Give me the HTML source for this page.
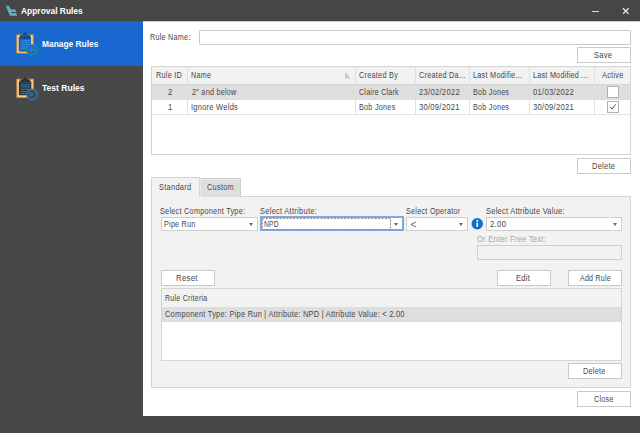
<!DOCTYPE html>
<html><head><meta charset="utf-8">
<style>
*{margin:0;padding:0;box-sizing:border-box}
html,body{width:640px;height:433px;overflow:hidden;background:#484848;font-family:"Liberation Sans",sans-serif;font-size:8.6px;color:#3a3a3a}
.a{position:absolute}
.t{position:absolute;white-space:nowrap;line-height:10px;transform-origin:0 0}
.btn{position:absolute;background:#fff;border:1px solid #cacaca}
.box{position:absolute;background:#fff;border:1px solid #cfcfcf}
.sep{position:absolute;width:1px;background:#e0e0e0}
.arrow{position:absolute;width:0;height:0;border-left:2.5px solid transparent;border-right:2.5px solid transparent;border-top:3px solid #666}
</style></head><body>
<div class="a" style="left:0;top:0;width:640px;height:21px;background:#464646"></div>
<div class="a" style="left:0;top:21px;width:143px;height:45px;background:#1868d0"></div>
<div class="a" style="left:143px;top:21px;width:497px;height:395px;background:#fff"></div>
<div class="a" style="left:143px;top:21px;width:497px;height:1px;background:#cfcfcf"></div>
<div class="a" style="left:0;top:21px;width:143px;height:1px;background:#2a5ea4"></div>

<!-- title icon -->
<svg class="a" style="left:5px;top:5px" width="13" height="12" viewBox="0 0 13 12">
<path d="M0.74 0.74 L3.86 0.74 L5.73 4.48 L10.3 4.48 L11.35 6.98 L5.94 6.98 L6.36 8.02 L11.14 8.02 L12.18 10.72 L4.9 10.72 Z" fill="#5cb2cf"/>
</svg>
<div class="a" style="left:592.3px;top:10.5px;width:6.5px;height:1.3px;background:#dedede"></div>
<svg class="a" style="left:621px;top:7px" width="9" height="9" viewBox="0 0 9 9"><path d="M2 1.3L7.6 6.9M7.6 1.3L2 6.9" stroke="#f0f0f0" stroke-width="1.25"/></svg>

<!-- sidebar icons -->
<svg class="a" style="left:0;top:0" width="45" height="110" viewBox="0 0 45 110">
<!-- manage -->
<rect x="16.4" y="34.5" width="17.2" height="19" fill="#f0963a"/>
<rect x="17.4" y="35.5" width="15.2" height="17" fill="#fdd590"/>
<rect x="18.9" y="37" width="12.2" height="14" fill="#1868d0"/>
<path d="M19.4 37.3V51.1H27" fill="none" stroke="#1d4f8c" stroke-width="0.9"/>
<g stroke="#3f92e2" stroke-width="0.8"><path d="M20.6 40.4h9.4M20.6 42.5h9.4M20.6 44.6h9.4M20.6 46.7h6M20.6 48.8h5"/></g>
<path d="M20.2 38.2V35.4H22.4L24 33.6Q25.1 31.9 26.2 33.6L27.8 35.4H30V38.2Z" fill="#21528f" stroke="#17365f" stroke-width="0.8"/>
<circle cx="31.6" cy="49.8" r="5.1" fill="#1868d0" stroke="#1f9a70" stroke-width="1.1"/>
<path d="M31.6 46.8v6M28.6 49.8h6" stroke="#22a074" stroke-width="1.1"/>
<!-- test -->
<rect x="16.4" y="78.8" width="17.4" height="19" fill="#f0963a"/>
<rect x="17.4" y="79.8" width="15.4" height="17" fill="#fdd590"/>
<rect x="18.9" y="81.3" width="12.4" height="14" fill="#2f2f2f"/>
<g stroke="#2b88d4" stroke-width="0.9"><path d="M20.4 84.8h9.6M20.4 86.9h9.6M20.4 89.2h9.6M20.4 91.4h6.5M20.4 93.5h5.5"/></g>
<path d="M20.2 82.4V79.6H22.4L24 77.8Q25.1 76.1 26.2 77.8L27.8 79.6H30V82.4Z" fill="#2c2c2c" stroke="#5a5a5a" stroke-width="0.7"/>
<circle cx="32" cy="94.4" r="5.2" fill="#484848" stroke="#2a80c2" stroke-width="1.2"/>
<path d="M30.2 92.6L33.2 94.4L30.2 96.2Z" fill="none" stroke="#2a80c2" stroke-width="0.9"/>
</svg>

<!-- rule name -->
<div class="box" style="left:199px;top:30px;width:432px;height:15px;border-color:#c9c9c9;border-radius:1px"></div>
<div class="btn" style="left:577px;top:47px;width:54px;height:16px"></div>

<!-- grid -->
<div class="box" style="left:151px;top:66px;width:480px;height:89px;border-color:#d4d4d4"></div>
<div class="a" style="left:152px;top:67px;width:478px;height:17px;background:#f2f2f2"></div>
<div class="a" style="left:152px;top:84px;width:478px;height:1px;background:#d4d4d4"></div>
<div class="a" style="left:152px;top:85px;width:478px;height:15px;background:#dedede"></div>
<div class="a" style="left:152px;top:114px;width:478px;height:1px;background:#e2e2e2"></div>
<div class="sep" style="left:187px;top:67px;height:47px"></div>
<div class="sep" style="left:355px;top:67px;height:47px"></div>
<div class="sep" style="left:415px;top:67px;height:47px"></div>
<div class="sep" style="left:469px;top:67px;height:47px"></div>
<div class="sep" style="left:529px;top:67px;height:47px"></div>
<div class="sep" style="left:594px;top:67px;height:47px"></div>
<svg class="a" style="left:344px;top:72px" width="8" height="8" viewBox="0 0 8 8"><path d="M1 0.8L2.4 0.8L6.9 6.7L1 6.7Z" fill="#d6d6d6"/><path d="M1 1.3h1.2M1 3.2h2.6M1 5.1h4" stroke="#c0c0c0" stroke-width="0.9"/></svg>
<div class="a" style="left:607px;top:86px;width:11.5px;height:11.5px;background:#fff;border:1px solid #b0b0b0"></div>
<div class="a" style="left:607px;top:101px;width:11.5px;height:11.5px;background:#fff;border:1px solid #b0b0b0"></div>
<svg class="a" style="left:607px;top:101px" width="12" height="12" viewBox="0 0 12 12"><path d="M3 5.9L5.1 8.1L8.5 3.2" fill="none" stroke="#5a5a5a" stroke-width="1"/></svg>

<div class="btn" style="left:577px;top:158px;width:54px;height:16px"></div>

<!-- tabs -->
<div class="a" style="left:151px;top:196px;width:480px;height:192px;background:#f2f2f2;border:1px solid #d4d4d4"></div>
<div class="a" style="left:199px;top:178px;width:42px;height:19px;background:#dedede;border:1px solid #cdcdcd;border-bottom:none;box-shadow:inset 1px 1px 0 #e9e9e9"></div>
<div class="a" style="left:151px;top:177px;width:49px;height:20px;background:#f2f2f2;border:1px solid #d4d4d4;border-bottom:none"></div>

<div class="box" style="left:161px;top:217px;width:97px;height:14px"></div>
<div class="arrow" style="left:249px;top:223px"></div>

<div class="a" style="left:260px;top:216px;width:144px;height:15px;background:#fff;border:2px solid #80aadf"></div>
<svg class="a" style="left:262px;top:218px" width="129" height="12" viewBox="0 0 129 12"><rect x="0.5" y="0.5" width="128" height="11" fill="none" stroke="#8c8c8c" stroke-width="1" stroke-dasharray="2 1.4"/></svg>
<div class="arrow" style="left:394.2px;top:222.5px"></div>

<div class="box" style="left:406px;top:217px;width:62px;height:14px"></div>
<div class="arrow" style="left:458.8px;top:222.5px"></div>
<svg class="a" style="left:405px;top:216px" width="16" height="16" viewBox="405 216 16 16"><path d="M416.2 222L410.9 224.5L416.2 227" fill="none" stroke="#505050" stroke-width="0.85"/></svg>

<svg class="a" style="left:470px;top:217px" width="14" height="14" viewBox="0 0 14 14"><circle cx="7.25" cy="6.8" r="5.7" fill="#0f70c8"/><rect x="6.45" y="5.6" width="1.6" height="4.3" fill="#fff"/><circle cx="7.25" cy="3.7" r="0.95" fill="#fff"/></svg>

<div class="box" style="left:486px;top:217px;width:136px;height:14px"></div>
<div class="arrow" style="left:613px;top:222.5px"></div>

<div class="a" style="left:477px;top:245px;width:145px;height:15px;background:#f2f2f2;border:1px solid #d0d0d0"></div>

<div class="btn" style="left:161px;top:270px;width:54px;height:16px"></div>
<div class="btn" style="left:497px;top:270px;width:54px;height:16px"></div>
<div class="btn" style="left:568px;top:270px;width:54px;height:16px"></div>

<div class="box" style="left:161px;top:288px;width:461px;height:73px;border-color:#d4d4d4"></div>
<div class="a" style="left:162px;top:289px;width:459px;height:18px;background:#f2f2f2"></div>
<div class="a" style="left:162px;top:307px;width:459px;height:15px;background:#dedede"></div>

<div class="btn" style="left:568px;top:363px;width:54px;height:16px"></div>
<div class="btn" style="left:577px;top:391px;width:54px;height:16px"></div>

<div class="t" style="left:20.55px;top:5.60px;font-size:8.3px;font-weight:bold;letter-spacing:0.0px;color:#ffffff;transform:scaleX(1.0141)">Approval Rules</div>
<div class="t" style="left:42.00px;top:38.50px;font-size:8.3px;font-weight:bold;letter-spacing:0.0px;color:#ffffff;transform:scaleX(1.0091)">Manage Rules</div>
<div class="t" style="left:41.70px;top:83.00px;font-size:8.3px;font-weight:bold;letter-spacing:0.0px;color:#ffffff;transform:scaleX(1.0293)">Test Rules</div>
<div class="t" style="left:150.35px;top:32.00px;font-size:8.3px;font-weight:normal;letter-spacing:0.3px;color:#474747;transform:scaleX(0.8667)">Rule Name:</div>
<div class="t" style="left:594.34px;top:50.00px;font-size:8.3px;font-weight:normal;letter-spacing:0.3px;color:#474747;transform:scaleX(0.9105)">Save</div>
<div class="t" style="left:156.14px;top:70.20px;font-size:8.3px;font-weight:normal;letter-spacing:0.3px;color:#474747;transform:scaleX(0.8772)">Rule ID</div>
<div class="t" style="left:191.25px;top:70.20px;font-size:8.3px;font-weight:normal;letter-spacing:0.3px;color:#474747;transform:scaleX(0.8636)">Name</div>
<div class="t" style="left:359.36px;top:70.20px;font-size:8.3px;font-weight:normal;letter-spacing:0.3px;color:#474747;transform:scaleX(0.8777)">Created By</div>
<div class="t" style="left:419.36px;top:70.20px;font-size:8.3px;font-weight:normal;letter-spacing:0.3px;color:#474747;transform:scaleX(0.8792)">Created Da...</div>
<div class="t" style="left:473.14px;top:70.20px;font-size:8.3px;font-weight:normal;letter-spacing:0.3px;color:#474747;transform:scaleX(0.8771)">Last Modifie...</div>
<div class="t" style="left:532.85px;top:70.20px;font-size:8.3px;font-weight:normal;letter-spacing:0.3px;color:#474747;transform:scaleX(0.8661)">Last Modified ...</div>
<div class="t" style="left:602.20px;top:70.20px;font-size:8.3px;font-weight:normal;letter-spacing:0.3px;color:#474747;transform:scaleX(0.8842)">Active</div>
<div class="t" style="left:167.87px;top:87.00px;font-size:8.3px;font-weight:normal;letter-spacing:0.3px;color:#474747;transform:scaleX(0.9200)">2</div>
<div class="t" style="left:191.67px;top:87.00px;font-size:8.3px;font-weight:normal;letter-spacing:0.3px;color:#474747;transform:scaleX(0.8693)">2&quot; and below</div>
<div class="t" style="left:359.28px;top:87.00px;font-size:8.3px;font-weight:normal;letter-spacing:0.3px;color:#474747;transform:scaleX(0.8497)">Claire Clark</div>
<div class="t" style="left:419.24px;top:87.00px;font-size:8.3px;font-weight:normal;letter-spacing:0.3px;color:#474747;transform:scaleX(0.9195)">23/02/2022</div>
<div class="t" style="left:473.35px;top:87.00px;font-size:8.3px;font-weight:normal;letter-spacing:0.3px;color:#474747;transform:scaleX(0.8642)">Bob Jones</div>
<div class="t" style="left:533.27px;top:87.00px;font-size:8.3px;font-weight:normal;letter-spacing:0.3px;color:#474747;transform:scaleX(0.9211)">01/03/2022</div>
<div class="t" style="left:167.87px;top:102.00px;font-size:8.3px;font-weight:normal;letter-spacing:0.3px;color:#474747;transform:scaleX(0.9200)">1</div>
<div class="t" style="left:191.23px;top:102.00px;font-size:8.3px;font-weight:normal;letter-spacing:0.3px;color:#474747;transform:scaleX(0.8990)">Ignore Welds</div>
<div class="t" style="left:359.05px;top:102.00px;font-size:8.3px;font-weight:normal;letter-spacing:0.3px;color:#474747;transform:scaleX(0.8716)">Bob Jones</div>
<div class="t" style="left:419.47px;top:102.00px;font-size:8.3px;font-weight:normal;letter-spacing:0.3px;color:#474747;transform:scaleX(0.9143)">30/09/2021</div>
<div class="t" style="left:473.35px;top:102.00px;font-size:8.3px;font-weight:normal;letter-spacing:0.3px;color:#474747;transform:scaleX(0.8642)">Bob Jones</div>
<div class="t" style="left:533.27px;top:102.00px;font-size:8.3px;font-weight:normal;letter-spacing:0.3px;color:#474747;transform:scaleX(0.9211)">30/09/2021</div>
<div class="t" style="left:592.22px;top:161.10px;font-size:8.3px;font-weight:normal;letter-spacing:0.3px;color:#474747;transform:scaleX(0.9020)">Delete</div>
<div class="t" style="left:159.25px;top:182.40px;font-size:8.3px;font-weight:normal;letter-spacing:0.3px;color:#474747;transform:scaleX(0.8978)">Standard</div>
<div class="t" style="left:206.56px;top:182.40px;font-size:8.3px;font-weight:normal;letter-spacing:0.3px;color:#474747;transform:scaleX(0.8897)">Custom</div>
<div class="t" style="left:160.16px;top:205.60px;font-size:8.3px;font-weight:normal;letter-spacing:0.3px;color:#474747;transform:scaleX(0.8762)">Select Component Type:</div>
<div class="t" style="left:259.85px;top:205.60px;font-size:8.3px;font-weight:normal;letter-spacing:0.3px;color:#474747;transform:scaleX(0.9020)">Select Attribute:</div>
<div class="t" style="left:405.57px;top:205.60px;font-size:8.3px;font-weight:normal;letter-spacing:0.3px;color:#474747;transform:scaleX(0.8696)">Select Operator</div>
<div class="t" style="left:485.80px;top:205.60px;font-size:8.3px;font-weight:normal;letter-spacing:0.3px;color:#474747;transform:scaleX(0.8960)">Select Attribute Value:</div>
<div class="t" style="left:164.15px;top:219.00px;font-size:8.3px;font-weight:normal;letter-spacing:0.3px;color:#474747;transform:scaleX(0.8629)">Pipe Run</div>
<div class="t" style="left:263.79px;top:219.00px;font-size:8.3px;font-weight:normal;letter-spacing:0.3px;color:#474747;transform:scaleX(0.8118)">NPD</div>
<div class="t" style="left:490.33px;top:219.00px;font-size:8.3px;font-weight:normal;letter-spacing:0.3px;color:#474747;transform:scaleX(0.9354)">2.00</div>
<div class="t" style="left:476.55px;top:234.00px;font-size:8.3px;font-weight:normal;letter-spacing:0.3px;color:#a6a6a6;transform:scaleX(0.9060)">Or Enter Free Text:</div>
<div class="t" style="left:175.90px;top:273.00px;font-size:8.3px;font-weight:normal;letter-spacing:0.3px;color:#474747;transform:scaleX(0.9364)">Reset</div>
<div class="t" style="left:516.31px;top:272.80px;font-size:8.3px;font-weight:normal;letter-spacing:0.3px;color:#474747;transform:scaleX(0.9172)">Edit</div>
<div class="t" style="left:579.50px;top:272.80px;font-size:8.3px;font-weight:normal;letter-spacing:0.3px;color:#474747;transform:scaleX(0.8472)">Add Rule</div>
<div class="t" style="left:164.86px;top:293.00px;font-size:8.3px;font-weight:normal;letter-spacing:0.3px;color:#474747;transform:scaleX(0.8510)">Rule Criteria</div>
<div class="t" style="left:165.15px;top:309.20px;font-size:8.3px;font-weight:normal;letter-spacing:0.3px;color:#474747;transform:scaleX(0.8902)">Component Type: Pipe Run | Attribute: NPD | Attribute Value: &lt; 2.00</div>
<div class="t" style="left:583.34px;top:366.10px;font-size:8.3px;font-weight:normal;letter-spacing:0.3px;color:#474747;transform:scaleX(0.8776)">Delete</div>
<div class="t" style="left:593.87px;top:394.00px;font-size:8.3px;font-weight:normal;letter-spacing:0.3px;color:#474747;transform:scaleX(0.8698)">Close</div>
</body></html>
